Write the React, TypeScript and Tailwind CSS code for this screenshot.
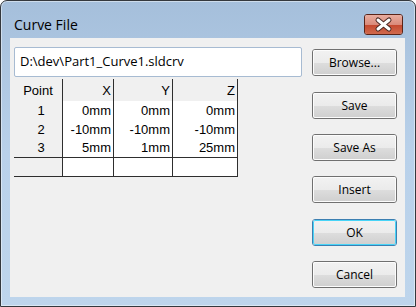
import React from "react";

const seg = "font-['Open_Sans','Noto_Sans',sans-serif]";
const tbl = "font-['Liberation_Sans',Arial,sans-serif]";

function CloseButton() {
  return (
    <div className="mt-[13px] w-[39px] h-[21px] rounded-[3px] border border-[#5a2418] overflow-hidden relative shadow-[inset_0_0_0_1px_rgba(255,210,200,0.55)]">
      <div className="h-1/2 bg-gradient-to-b from-[#e9ad9f] to-[#d98a79]" />
      <div className="h-1/2 bg-gradient-to-b from-[#c4482e] to-[#d06a4d]" />
      <svg className="absolute inset-0" width="37" height="19" viewBox="0 0 37 19">
        <path d="M13 5 L24 14 M24 5 L13 14" stroke="#4a2a24" strokeWidth="5" strokeLinecap="round" fill="none" />
        <path d="M13 5 L24 14 M24 5 L13 14" stroke="#ffffff" strokeWidth="3" strokeLinecap="round" fill="none" />
      </svg>
    </div>
  );
}

function Btn({ label, ok, className }: { label: string; ok?: boolean; className?: string }) {
  return (
    <div
      className={
        "w-[85px] h-[27px] rounded-[3px] border overflow-hidden relative " +
        (ok ? "border-[#3c7fb1] " : "border-[#707070] ") +
        (className ?? "")
      }
    >
      <div className={"absolute inset-0 rounded-[2px] border " + (ok ? "border-[#48d4f7]" : "border-[#fcfcfc]")} />
      <div className="h-1/2 bg-gradient-to-b from-[#f2f2f2] to-[#ebebeb]" />
      <div className="h-1/2 bg-gradient-to-b from-[#dddddd] to-[#cfcfcf]" />
      <div className={"absolute inset-0 flex items-center justify-center text-[12px] text-black " + seg}>{label}</div>
    </div>
  );
}

const rows = [
  ["1", "0mm", "0mm", "0mm"],
  ["2", "-10mm", "-10mm", "-10mm"],
  ["3", "5mm", "1mm", "25mm"],
];

function Table() {
  const vline = "border-r border-[#2e2e2e]";
  return (
    <div className={"mt-[2px] w-[224px] grid grid-cols-[49px_51px_59px_65px] text-[13px] text-black " + tbl}>
      <div className={"h-[22px] flex items-center justify-center pt-[2px] " + vline}>Point</div>
      <div className={"h-[22px] flex items-center justify-end pr-[2px] pt-[2px] " + vline}>X</div>
      <div className={"h-[22px] flex items-center justify-end pr-[2px] pt-[2px] " + vline}>Y</div>
      <div className={"h-[22px] flex items-center justify-end pr-[2px] pt-[2px] " + vline}>Z</div>
      {rows.map((r, i) => (
        <React.Fragment key={i}>
          <div className={"h-[19px] flex items-center justify-center pl-[6px] " + vline + (i === 2 ? " border-b" : "")}>{r[0]}</div>
          {r.slice(1).map((v, j) => (
            <div key={j} className={"h-[19px] flex items-center justify-end pr-[2px] bg-white " + vline + (i === 2 ? " border-b" : "")}>
              {v}
            </div>
          ))}
        </React.Fragment>
      ))}
      <div className={"h-[19px] border-b " + vline} />
      <div className={"h-[19px] bg-white border-b " + vline} />
      <div className={"h-[19px] bg-white border-b " + vline} />
      <div className={"h-[19px] bg-white border-b " + vline} />
    </div>
  );
}

export default function App() {
  return (
    <div className="w-[416px] h-[307px] bg-white">
      <div className="w-full h-full rounded-t-[7px] border border-[#34383d] bg-gradient-to-b from-[#a5bfdb] via-[#b9d1ea] to-[#bed5ec] flex flex-col shadow-[inset_0_0_0_1px_rgba(255,255,255,0.45)]">
        <div className="h-[37px] flex items-start justify-between pl-[13px] pr-[12px]">
          <span className={"mt-[14px] text-[14px] leading-[20px] text-black " + seg}>Curve File</span>
          <CloseButton />
        </div>
        <div className="ml-[9px] w-[395px] h-[259px] bg-[#f0f0f0] flex">
          <div className="ml-[4px] mt-[9px] flex flex-col">
            <div className="w-[288px] h-[30px] rounded-[2px] border border-[#a7bbd2] bg-white flex items-center pl-[5px]">
              <span className={"text-[13px] text-black " + seg}>D:\dev\Part1_Curve1.sldcrv</span>
            </div>
            <Table />
          </div>
          <div className="ml-[10px] mt-[11px] flex flex-col">
            <Btn label="Browse..." />
            <Btn label="Save" className="mt-[16px]" />
            <Btn label="Save As" className="mt-[15px]" />
            <Btn label="Insert" className="mt-[15px]" />
            <Btn label="OK" ok className="mt-[16px]" />
            <Btn label="Cancel" className="mt-[15px]" />
          </div>
        </div>
      </div>
    </div>
  );
}
